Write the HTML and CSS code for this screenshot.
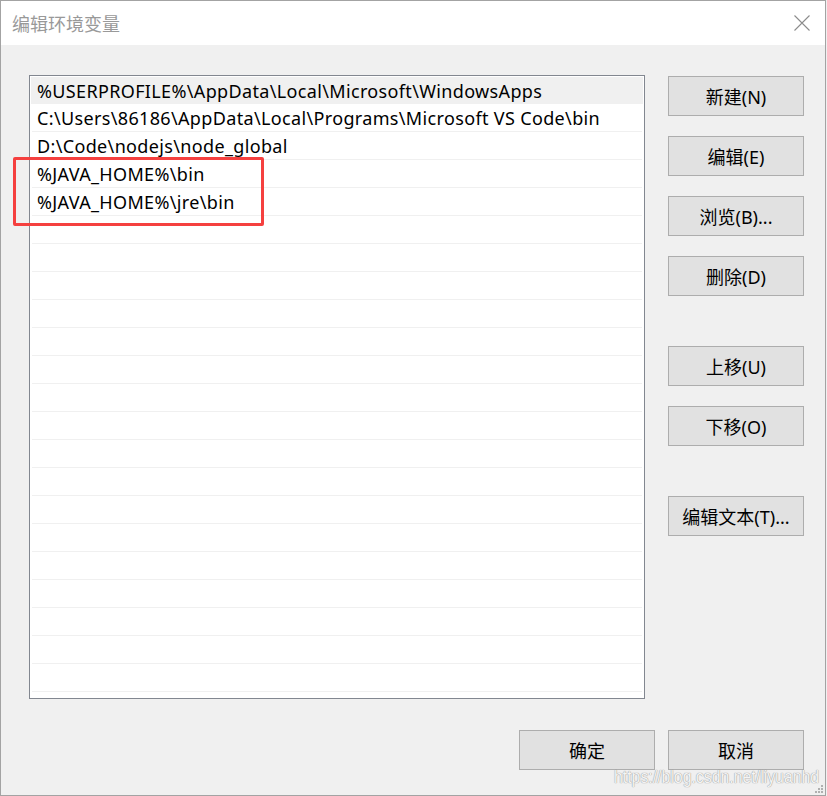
FILE: index.html
```html
<!DOCTYPE html>
<html lang="zh-CN">
<head>
<meta charset="utf-8">
<title>编辑环境变量</title>
<link rel="stylesheet" href="styles.css">
</head>
<body>
<div class="window">
  <div class="titlebar">
    <span class="title">编辑环境变量</span>
    <svg class="close" width="16" height="16" viewBox="0 0 16 16"><path d="M0.5 0.5 L15.5 15.5 M15.5 0.5 L0.5 15.5" stroke="#8c8c8c" stroke-width="1.1" fill="none"/></svg>
  </div>
  <div class="content">
    <div class="main">
      <div class="listbox">
        <div class="row selected">%USERPROFILE%\AppData\Local\Microsoft\WindowsApps</div>
        <div class="row">C:\Users\86186\AppData\Local\Programs\Microsoft VS Code\bin</div>
        <div class="row">D:\Code\nodejs\node_global</div>
        <div class="row">%JAVA_HOME%\bin</div>
        <div class="row">%JAVA_HOME%\jre\bin</div>
        <div class="row"></div><div class="row"></div><div class="row"></div><div class="row"></div>
        <div class="row"></div><div class="row"></div><div class="row"></div><div class="row"></div>
        <div class="row"></div><div class="row"></div><div class="row"></div><div class="row"></div>
        <div class="row"></div><div class="row"></div><div class="row"></div><div class="row"></div>
        <div class="row"></div>
      </div>
      <div class="side">
        <div class="group">
          <button class="btn">新建(N)</button>
          <button class="btn">编辑(E)</button>
          <button class="btn">浏览(B)...</button>
          <button class="btn">删除(D)</button>
        </div>
        <div class="group">
          <button class="btn">上移(U)</button>
          <button class="btn">下移(O)</button>
        </div>
        <div class="group">
          <button class="btn">编辑文本(T)...</button>
        </div>
      </div>
    </div>
    <div class="footer">
      <button class="btn">确定</button>
      <button class="btn">取消</button>
    </div>
  </div>
  <div class="highlight-box"></div>
  <div class="watermark">https://blog.csdn.net/liyuanhd</div>
  <svg class="grip" width="10" height="10" viewBox="0 0 10 10">
    <rect x="7" y="1" width="2" height="2" fill="#b0b0b0"/>
    <rect x="4" y="4" width="2" height="2" fill="#b0b0b0"/>
    <rect x="7" y="4" width="2" height="2" fill="#b0b0b0"/>
    <rect x="1" y="7" width="2" height="2" fill="#b0b0b0"/>
    <rect x="4" y="7" width="2" height="2" fill="#b0b0b0"/>
    <rect x="7" y="7" width="2" height="2" fill="#b0b0b0"/>
  </svg>
</div>
</body>
</html>
```
FILE: styles.css
```css
html, body {
  margin: 0;
  padding: 0;
  background: #f0f0f0;
}
body {
  font-family: "Noto Sans", "Noto Sans CJK SC", sans-serif;
}
.window {
  position: relative;
  width: 826px;
  height: 796px;
  box-sizing: border-box;
  border: 1px solid #a3a3a3;
  background: #f0f0f0;
  display: flex;
  flex-direction: column;
  overflow: hidden;
}
.titlebar {
  height: 44px;
  background: #ffffff;
  display: flex;
  align-items: center;
  justify-content: space-between;
  padding: 0 15px 0 11px;
  flex: none;
}
.title {
  font-family: "Noto Sans CJK SC", sans-serif;
  font-size: 18px;
  color: #999999;
}
.close {
  display: block;
  width: 16px;
  height: 16px;
}
.content {
  flex: 1;
  display: flex;
  flex-direction: column;
  padding: 30px 21px 0 28px;
}
.main {
  display: flex;
  gap: 23px;
}
.listbox {
  width: 616px;
  height: 624px;
  box-sizing: border-box;
  border: 1px solid #828790;
  background: #ffffff;
  padding: 0 2px;
  overflow: hidden;
}
.row {
  height: 28px;
  box-sizing: border-box;
  border-bottom: 1px solid #f0f0f0;
  padding: 1px 0 0 5px;
  font-size: 18px;
  letter-spacing: 0.35px;
  line-height: 27px;
  color: #000000;
  white-space: nowrap;
}
.row.selected {
  background: #f0f0f0;
  margin: 1px -1px 0 -1px;
  height: 27px;
  padding: 0 0 0 6px;
  line-height: 28px;
}
.side {
  display: flex;
  flex-direction: column;
  gap: 50px;
  padding-top: 1px;
}
.group {
  display: flex;
  flex-direction: column;
  gap: 20px;
}
.btn {
  width: 136px;
  height: 40px;
  box-sizing: border-box;
  border: 1px solid #adadad;
  background: #e1e1e1;
  font-family: "Noto Sans", "Noto Sans CJK SC", sans-serif;
  font-size: 18px;
  color: #000000;
  padding: 0;
  margin: 0;
}
.footer {
  margin-top: 31px;
  display: flex;
  justify-content: flex-end;
  gap: 13px;
}
.highlight-box {
  position: absolute;
  left: 12px;
  top: 156px;
  width: 251px;
  height: 69px;
  box-sizing: border-box;
  border: 3px solid #f5403f;
  border-radius: 2px;
}
.watermark {
  position: absolute;
  right: 6px;
  bottom: 7px;
  font-family: "Liberation Sans", sans-serif;
  font-size: 18px;
  color: #f4f4f4;
  text-shadow: 0 0 1px #9a9a9a, 0 0 1px #9a9a9a;
  transform: scaleX(0.88);
  transform-origin: right center;
}
.grip {
  position: absolute;
  right: 1px;
  bottom: 1px;
}
```
